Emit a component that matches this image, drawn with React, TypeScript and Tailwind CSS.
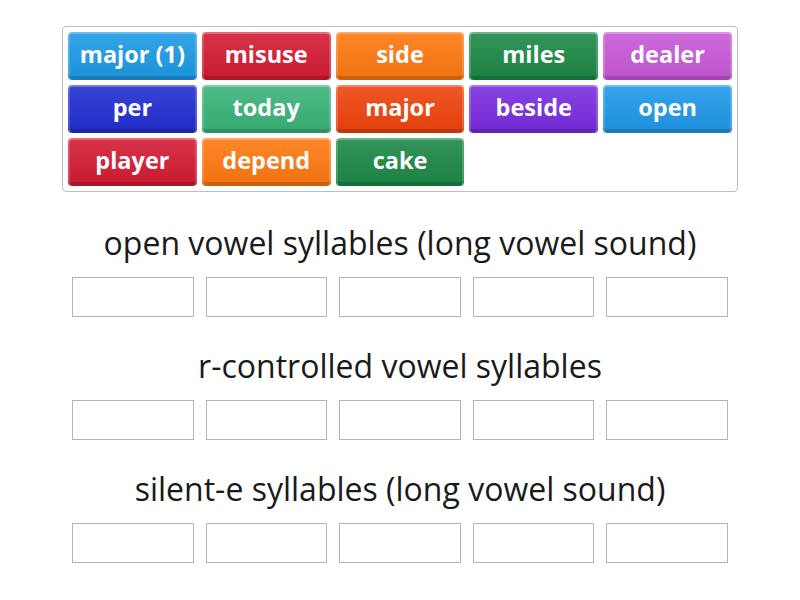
const tiles = [
  { label: "major (1)", bg: "bg-[#1f9be6]" },
  { label: "misuse", bg: "bg-[#d51d35]" },
  { label: "side", bg: "bg-[#ff7a12]" },
  { label: "miles", bg: "bg-[#1e8a48]" },
  { label: "dealer", bg: "bg-[#c95ad8]" },
  { label: "per", bg: "bg-[#2330d2]" },
  { label: "today", bg: "bg-[#3bb479]" },
  { label: "major", bg: "bg-[#f0450f]" },
  { label: "beside", bg: "bg-[#7a2ee0]" },
  { label: "open", bg: "bg-[#2299ea]" },
  { label: "player", bg: "bg-[#d51d35]" },
  { label: "depend", bg: "bg-[#ff7a12]" },
  { label: "cake", bg: "bg-[#1e8a48]" },
]

const groups = [
  "open vowel syllables (long vowel sound)",
  "r-controlled vowel syllables",
  "silent-e syllables (long vowel sound)",
]

function Tile({ label, bg }: { label: string; bg: string }) {
  return (
    <div
      className={`${bg} h-[48px] rounded-[4px] flex items-center justify-center text-white font-bold text-[23.5px] leading-none pb-[3px] bg-gradient-to-b from-white/10 to-black/5 shadow-[inset_0_2px_0_rgba(255,255,255,0.28),inset_2px_0_0_rgba(255,255,255,0.18),inset_-2px_0_0_rgba(255,255,255,0.18),inset_0_-4px_0_rgba(0,0,0,0.16)]`}
    >
      {label}
    </div>
  )
}

function DropRow() {
  return (
    <div className="grid grid-cols-5 w-[668px] mx-auto">
      {[0, 1, 2, 3, 4].map((i) => (
        <div key={i} className="px-[6px]">
          <div className="h-[40px] border border-[#b4b4b4] bg-white" />
        </div>
      ))}
    </div>
  )
}

export default function App() {
  return (
    <div className="w-[800px] h-[600px] bg-white font-['Open_Sans',sans-serif] pt-[26px]">
      <div className="w-[676px] mx-auto border border-[#bdbdbd] rounded-[4px] p-[5px]">
        <div className="grid grid-cols-5 gap-[5px]">
          {tiles.map((t, i) => (
            <Tile key={i} label={t.label} bg={t.bg} />
          ))}
        </div>
      </div>

      {groups.map((g, i) => (
        <div key={g} className={i === 0 ? "mt-[31px]" : "mt-[29px]"}>
          <div className="h-[40px] flex items-center justify-center text-[32px] text-[#1a1a1a] leading-none">
            {g}
          </div>
          <div className="mt-[14px]">
            <DropRow />
          </div>
        </div>
      ))}
    </div>
  )
}
